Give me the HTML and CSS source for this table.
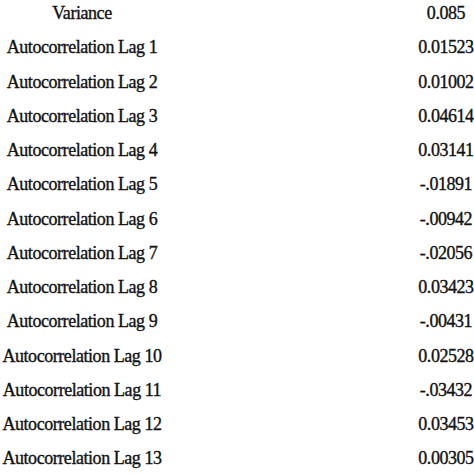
FILE: index.html
```html
<!DOCTYPE html>
<html>
<head>
<meta charset="utf-8">
<link rel="stylesheet" href="styles.css">
</head>
<body>
<div class="table">
  <div class="row"><span class="label">Variance</span><span class="value">0.085</span></div>
  <div class="row"><span class="label">Autocorrelation Lag 1</span><span class="value">0.01523</span></div>
  <div class="row"><span class="label">Autocorrelation Lag 2</span><span class="value">0.01002</span></div>
  <div class="row"><span class="label">Autocorrelation Lag 3</span><span class="value">0.04614</span></div>
  <div class="row"><span class="label">Autocorrelation Lag 4</span><span class="value">0.03141</span></div>
  <div class="row"><span class="label">Autocorrelation Lag 5</span><span class="value">-.01891</span></div>
  <div class="row"><span class="label">Autocorrelation Lag 6</span><span class="value">-.00942</span></div>
  <div class="row"><span class="label">Autocorrelation Lag 7</span><span class="value">-.02056</span></div>
  <div class="row"><span class="label">Autocorrelation Lag 8</span><span class="value">0.03423</span></div>
  <div class="row"><span class="label">Autocorrelation Lag 9</span><span class="value">-.00431</span></div>
  <div class="row"><span class="label">Autocorrelation Lag 10</span><span class="value">0.02528</span></div>
  <div class="row"><span class="label">Autocorrelation Lag 11</span><span class="value">-.03432</span></div>
  <div class="row"><span class="label">Autocorrelation Lag 12</span><span class="value">0.03453</span></div>
  <div class="row"><span class="label">Autocorrelation Lag 13</span><span class="value">0.00305</span></div>
</div>
</body>
</html>
```
FILE: styles.css
```css
html, body {
  margin: 0;
  padding: 0;
  background: #ffffff;
}
body {
  width: 474px;
  height: 474px;
  overflow: hidden;
  font-family: "Liberation Serif", "Times New Roman", serif;
  font-size: 18px;
  color: #111111;
}
.table {
  display: flex;
  flex-direction: column;
  padding-top: 2px;
}
.row {
  display: grid;
  grid-template-columns: 164px 1fr 56px;
  height: 34.25px;
  line-height: 22px;
}
.label,
.value {
  white-space: nowrap;
  letter-spacing: -0.45px;
  -webkit-text-stroke: 0.35px #111111;
  justify-self: center;
}
.label {
  grid-column: 1;
}
.value {
  grid-column: 3;
}
```
